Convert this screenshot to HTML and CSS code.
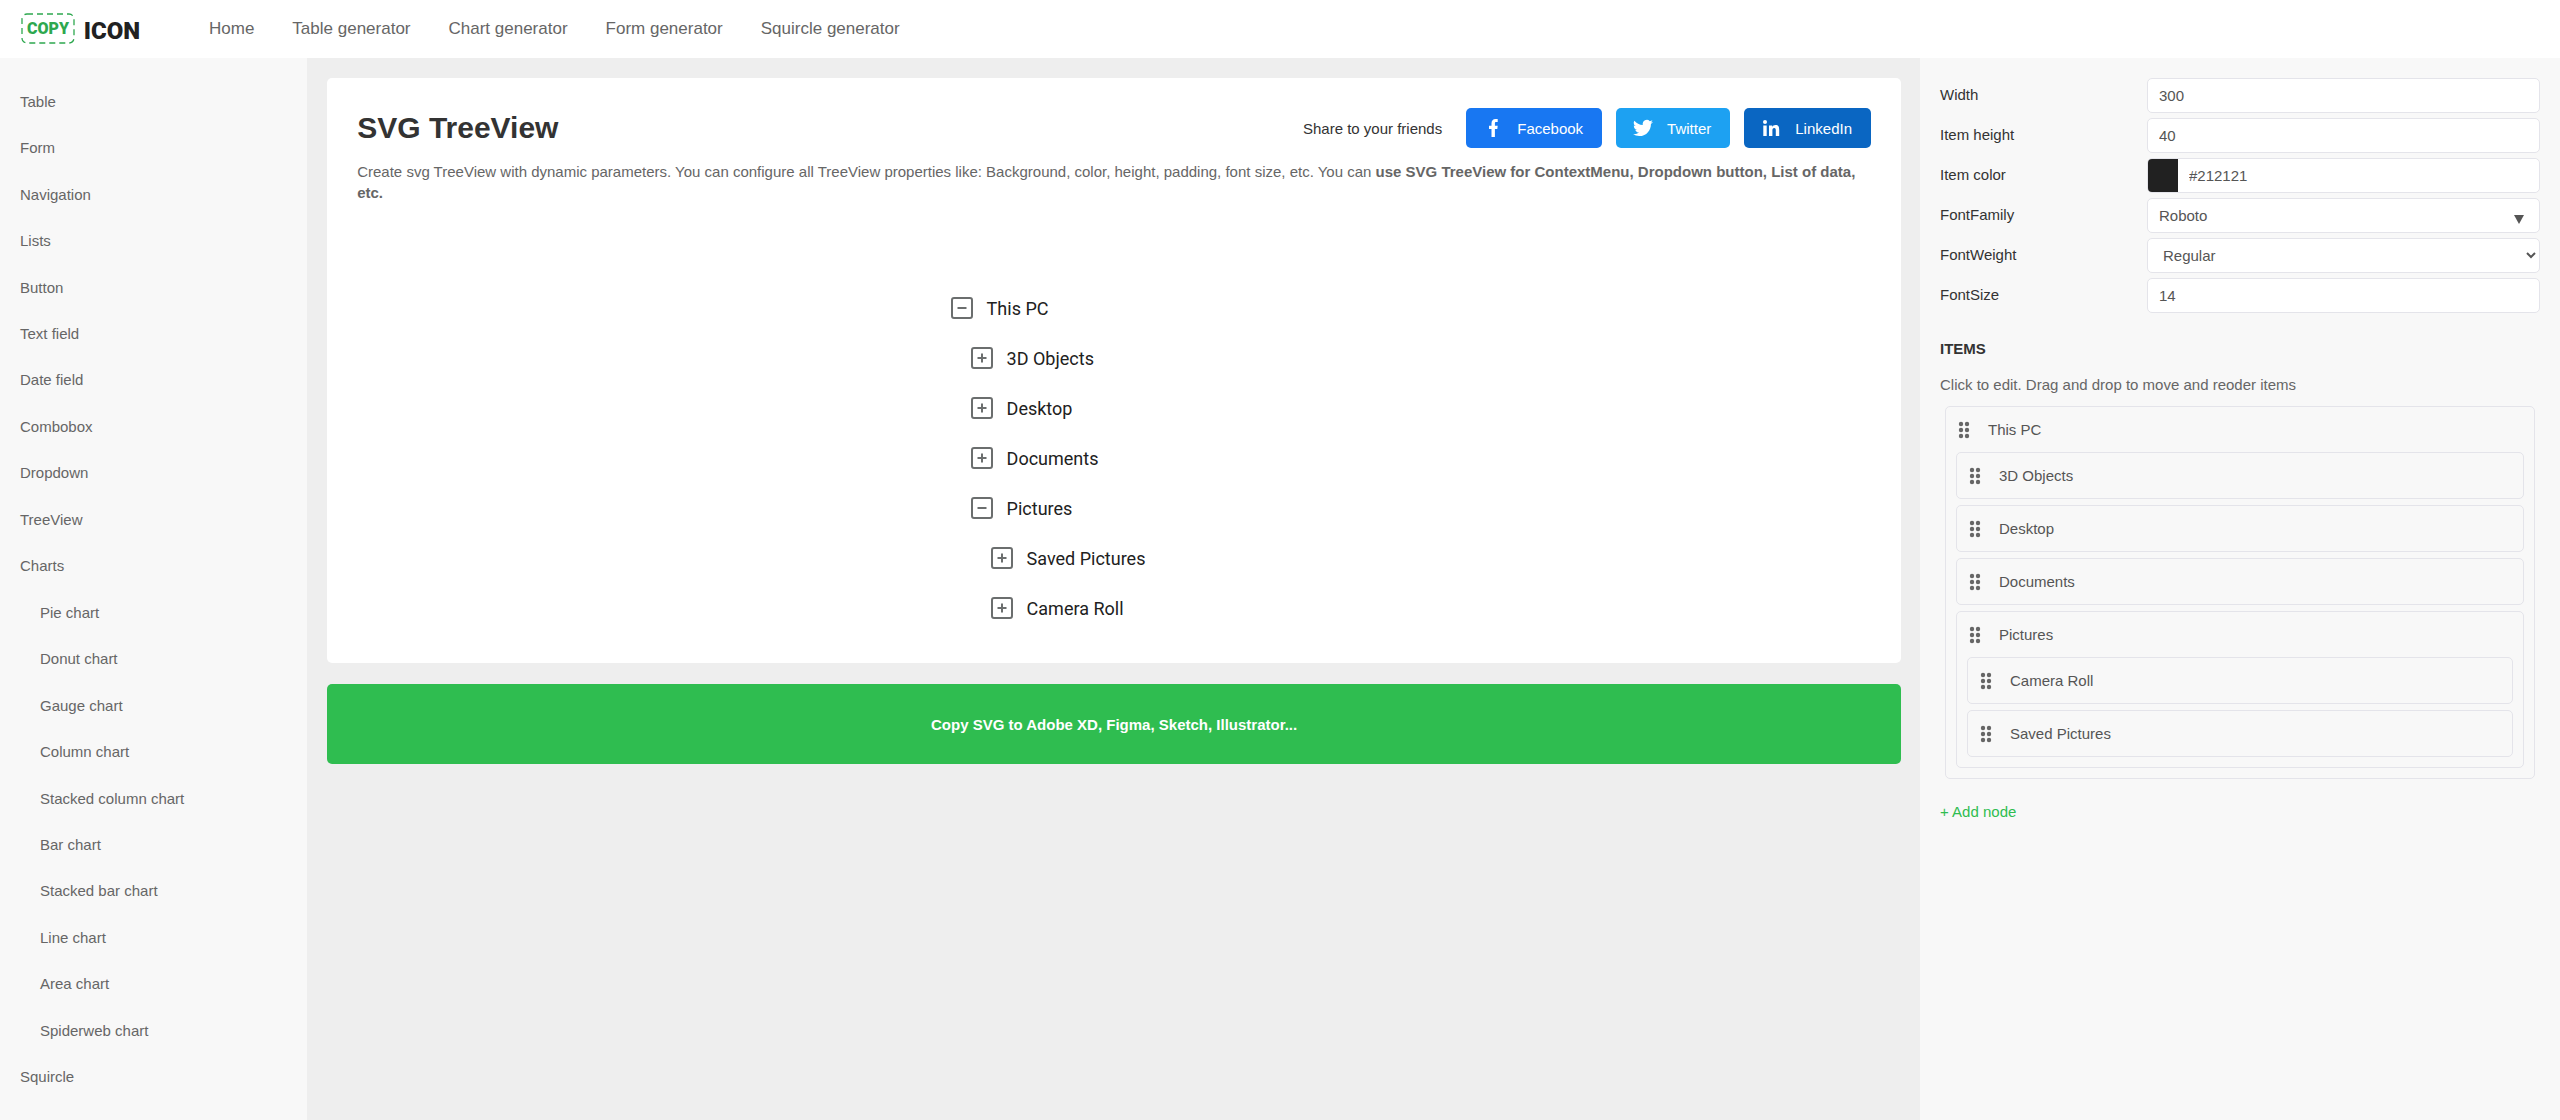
FILE: index.html
```
<!DOCTYPE html>
<html lang="en">
<head>
    <meta charset="UTF-8">
    <meta name="viewport" content="width=device-width, initial-scale=1.0">
    <title>SVG TreeView</title>
    <link rel="stylesheet" href="styles.css">
</head>
<body>

<svg class="sprite">
    <symbol id="grip" viewBox="0 0 12 18">
        <circle cx="3" cy="3" r="2.2"/><circle cx="9" cy="3" r="2.2"/>
        <circle cx="3" cy="9" r="2.2"/><circle cx="9" cy="9" r="2.2"/>
        <circle cx="3" cy="15" r="2.2"/><circle cx="9" cy="15" r="2.2"/>
    </symbol>
    <symbol id="plus" viewBox="0 0 22 22">
        <rect x="1" y="1" width="20" height="20" rx="2"/>
        <path d="M6.5 11h9M11 6.5v9"/>
    </symbol>
    <symbol id="minus" viewBox="0 0 22 22">
        <rect x="1" y="1" width="20" height="20" rx="2"/>
        <path d="M6.5 11h9"/>
    </symbol>
</svg>

<header class="header">
    <a class="logo" href="#">
        <svg width="124" height="34" viewBox="0 0 124 34">
            <rect class="logo-frame" x="2" y="3" width="52" height="29" rx="5"/>
            <text class="logo-copy" x="28" y="23">COPY</text>
            <text class="logo-icon" x="92" y="28">ICON</text>
        </svg>
    </a>
    <nav class="nav">
        <a href="#">Home</a>
        <a href="#">Table generator</a>
        <a href="#">Chart generator</a>
        <a href="#">Form generator</a>
        <a href="#">Squircle generator</a>
    </nav>
</header>

<div class="page">
    <nav class="sidebar">
        <a href="#">Table</a>
        <a href="#">Form</a>
        <a href="#">Navigation</a>
        <a href="#">Lists</a>
        <a href="#">Button</a>
        <a href="#">Text field</a>
        <a href="#">Date field</a>
        <a href="#">Combobox</a>
        <a href="#">Dropdown</a>
        <a href="#">TreeView</a>
        <a href="#">Charts</a>
        <a class="sub" href="#">Pie chart</a>
        <a class="sub" href="#">Donut chart</a>
        <a class="sub" href="#">Gauge chart</a>
        <a class="sub" href="#">Column chart</a>
        <a class="sub" href="#">Stacked column chart</a>
        <a class="sub" href="#">Bar chart</a>
        <a class="sub" href="#">Stacked bar chart</a>
        <a class="sub" href="#">Line chart</a>
        <a class="sub" href="#">Area chart</a>
        <a class="sub" href="#">Spiderweb chart</a>
        <a href="#">Squircle</a>
    </nav>

    <main class="content">
        <section class="card">
            <div class="card-head">
                <h1>SVG TreeView</h1>
                <div class="share">
                    <span class="share-label">Share to your friends</span>
                    <a class="share-button facebook" href="#">
                        <svg width="20" height="20" viewBox="0 0 20 20"><path d="M8.500 19v-8H6V7.800h2.500V5.300C8.500 2.600 10 1 12.500 1h2.200v3.100h-1.500c-1 0-1.300.5-1.300 1.400v2.300h2.800l-.4 3.200h-2.400v8z"/></svg>
                        Facebook
                    </a>
                    <a class="share-button twitter" href="#">
                        <svg width="20" height="20" viewBox="0 0 24 24"><path d="M24 4.600a10 10 0 0 1-2.800.8 4.900 4.900 0 0 0 2.100-2.700 10 10 0 0 1-3.100 1.200 4.900 4.900 0 0 0-8.400 4.500A14 14 0 0 1 1.700 3.200a4.900 4.900 0 0 0 1.500 6.500 5 5 0 0 1-2.200-.6v.1a4.900 4.900 0 0 0 3.900 4.800 5 5 0 0 1-2.200.1 4.900 4.900 0 0 0 4.600 3.400A9.900 9.900 0 0 1 0 19.500 14 14 0 0 0 7.500 21.700c9.100 0 14-7.500 14-14v-.6A10 10 0 0 0 24 4.600z"/></svg>
                        Twitter
                    </a>
                    <a class="share-button linkedin" href="#">
                        <svg width="20" height="20" viewBox="0 0 20 20"><circle cx="4" cy="4" r="2"/><path d="M2.300 7.400h3.400V18H2.300zM8 7.400h3.200v1.500c.6-1 1.700-1.800 3.300-1.800 3 0 3.700 2 3.700 4.800V18h-3.400v-5.500c0-1.300-.2-2.500-1.600-2.500s-1.800 1.100-1.800 2.500V18H8z"/></svg>
                        LinkedIn
                    </a>
                </div>
            </div>
            <p>Create svg TreeView with dynamic parameters. You can configure all TreeView properties like: Background, color, height, padding, font size, etc. You can <b>use SVG TreeView for ContextMenu, Dropdown button, List of data, etc.</b></p>

            <ul class="tree">
                <li>
                    <div class="tree-row"><button aria-label="Collapse"><svg><use href="#minus"/></svg></button>This PC</div>
                    <ul>
                        <li><div class="tree-row"><button aria-label="Expand"><svg><use href="#plus"/></svg></button>3D Objects</div></li>
                        <li><div class="tree-row"><button aria-label="Expand"><svg><use href="#plus"/></svg></button>Desktop</div></li>
                        <li><div class="tree-row"><button aria-label="Expand"><svg><use href="#plus"/></svg></button>Documents</div></li>
                        <li>
                            <div class="tree-row"><button aria-label="Collapse"><svg><use href="#minus"/></svg></button>Pictures</div>
                            <ul>
                                <li><div class="tree-row"><button aria-label="Expand"><svg><use href="#plus"/></svg></button>Saved Pictures</div></li>
                                <li><div class="tree-row"><button aria-label="Expand"><svg><use href="#plus"/></svg></button>Camera Roll</div></li>
                            </ul>
                        </li>
                    </ul>
                </li>
            </ul>
        </section>

        <button class="copy-button">Copy SVG to Adobe XD, Figma, Sketch, Illustrator...</button>
    </main>

    <aside class="settings">
        <form class="fields">
            <label for="width">Width</label>
            <input type="text" id="width" value="300">

            <label for="item-height">Item height</label>
            <input type="text" id="item-height" value="40">

            <label for="item-color">Item color</label>
            <div class="color-field">
                <span class="swatch"></span>
                <input type="text" id="item-color" value="#212121">
            </div>

            <label for="font-family">FontFamily</label>
            <select id="font-family" class="font-family">
                <option>Roboto</option>
            </select>

            <label for="font-weight">FontWeight</label>
            <select id="font-weight" class="font-weight">
                <option>Regular</option>
            </select>

            <label for="font-size">FontSize</label>
            <input type="text" id="font-size" value="14">
        </form>

        <h2>ITEMS</h2>
        <p>Click to edit. Drag and drop to move and reoder items</p>

        <ul class="nodes">
            <li>
                <div class="node"><svg><use href="#grip"/></svg>This PC</div>
                <ul>
                    <li><div class="node"><svg><use href="#grip"/></svg>3D Objects</div></li>
                    <li><div class="node"><svg><use href="#grip"/></svg>Desktop</div></li>
                    <li><div class="node"><svg><use href="#grip"/></svg>Documents</div></li>
                    <li>
                        <div class="node"><svg><use href="#grip"/></svg>Pictures</div>
                        <ul>
                            <li><div class="node"><svg><use href="#grip"/></svg>Camera Roll</div></li>
                            <li><div class="node"><svg><use href="#grip"/></svg>Saved Pictures</div></li>
                        </ul>
                    </li>
                </ul>
            </li>
        </ul>

        <a class="add-node" href="#">+ Add node</a>
    </aside>
</div>

</body>
</html>
```
FILE: styles.css
```
* {
    box-sizing: border-box;
}
body {
    margin: 0;
    min-height: 100vh;
    display: flex;
    flex-direction: column;
    font-family: Arial, "Liberation Sans", sans-serif;
    font-size: 15px;
    line-height: 21px;
    color: #666;
    background-color: #eee;
}
a {
    color: inherit;
    text-decoration: none;
}
ul {
    list-style: none;
    margin: 0;
    padding: 0;
}
.sprite {
    display: none;
}

/* header */
.header {
    display: flex;
    align-items: center;
    height: 58px;
    padding: 0 20px 2px;
    background-color: #fff;
}
.logo {
    width: 189px;
    height: 34px;
}
.logo text {
    font-family: Roboto, sans-serif;
    font-weight: 900;
    text-anchor: middle;
}
.logo-frame {
    fill: none;
    stroke: #2ea84f;
    stroke-width: 1.3;
    stroke-dasharray: 6 4;
}
.logo-copy {
    font-size: 16px;
    fill: #2ea84f;
}
.logo-icon {
    font-size: 24px;
    fill: #212121;
}
.nav {
    display: flex;
    gap: 38px;
    font-size: 17px;
}

/* columns */
.page {
    flex: 1;
    display: grid;
    grid-template-columns: 12% 1fr 25%;
}
.sidebar {
    display: flex;
    flex-direction: column;
    padding: 20px;
    background-color: #f8f8f8;
}
.sidebar a {
    flex: 1;
    display: flex;
    align-items: center;
}
.sidebar .sub {
    padding-left: 20px;
}
.content {
    padding: 20px 19px 20px 20px;
}

/* card */
.card {
    padding: 30px;
    border-radius: 5px;
    background-color: #fff;
}
.card-head {
    display: flex;
    justify-content: space-between;
    align-items: center;
}
h1 {
    margin: 0;
    font-size: 30px;
    line-height: 40px;
    color: #333;
}
.card p {
    margin: 13px 0 80px;
}
.share {
    display: flex;
    align-items: center;
    gap: 14px;
    color: #333;
}
.share-label {
    margin-right: 10px;
}
.share-button {
    display: flex;
    align-items: center;
    gap: 14px;
    height: 40px;
    padding: 0 19px 0 17px;
    border-radius: 5px;
    color: #fff;
}
.share-button svg {
    fill: currentColor;
}
.facebook {
    background-color: #1877f2;
}
.twitter {
    background-color: #1da1f2;
}
.linkedin {
    background-color: #0a66c2;
}
.tree {
    width: 375px;
    margin: 0 auto;
    padding-left: 24px;
    font-family: Roboto, sans-serif;
    font-size: 18px;
    color: #212121;
}
.tree ul {
    padding-left: 20px;
}
.tree-row {
    display: flex;
    align-items: center;
    gap: 14px;
    height: 50px;
}
.tree-row button {
    width: 22px;
    height: 22px;
    padding: 0;
    border: none;
    background: none;
    cursor: pointer;
}
.tree-row svg {
    display: block;
    width: 22px;
    height: 22px;
    fill: none;
    stroke: #6b6e6e;
    stroke-width: 2;
}
.copy-button {
    width: 100%;
    height: 80px;
    margin-top: 21px;
    border: none;
    border-radius: 5px;
    font: inherit;
    font-weight: bold;
    color: #fff;
    background-color: #2fbd50;
    cursor: pointer;
}

/* settings */
.settings {
    padding: 20px;
    background-color: #f8f8f8;
}
.fields {
    display: grid;
    grid-template-columns: 207px 1fr;
    row-gap: 5px;
    color: #333;
}
.fields label {
    line-height: 34px;
}
.fields input,
.fields select {
    width: 100%;
    height: 35px;
    padding: 0 11px;
    border: 1px solid #e4e4ea;
    border-radius: 5px;
    font: inherit;
    color: #555;
    background-color: #fff;
}
.color-field {
    display: flex;
    height: 35px;
    overflow: hidden;
    border: 1px solid #e4e4ea;
    border-radius: 5px;
    background-color: #fff;
}
.color-field input {
    height: 33px;
    border: none;
}
.swatch {
    flex: none;
    width: 30px;
    background-color: #212121;
}
.fields .font-family {
    appearance: none;
    background: #fff url("data:image/svg+xml,%3Csvg xmlns='http://www.w3.org/2000/svg' width='10' height='9'%3E%3Cpath d='M0 0h10L5 9z' fill='%23555'/%3E%3C/svg%3E") no-repeat right 15px top 16px;
}
.fields .font-weight {
    padding: 0 0 0 11px;
}
h2 {
    margin: 25px 0 15px;
    font-size: 15px;
    line-height: 21px;
    color: #333;
}
.settings p {
    margin: 0 0 11px;
}
.nodes {
    padding: 0 5px;
    color: #555;
}
.nodes li {
    margin-bottom: 6px;
    border: 1px solid #e4e4ea;
    border-radius: 5px;
}
.nodes ul {
    padding: 0 10px 4px;
}
.node {
    display: flex;
    align-items: center;
    gap: 18px;
    height: 45px;
    padding-left: 12px;
}
.node svg {
    width: 12px;
    height: 18px;
    fill: #666;
}
.add-node {
    display: inline-block;
    margin-top: 16px;
    color: #2fbd50;
}
```
